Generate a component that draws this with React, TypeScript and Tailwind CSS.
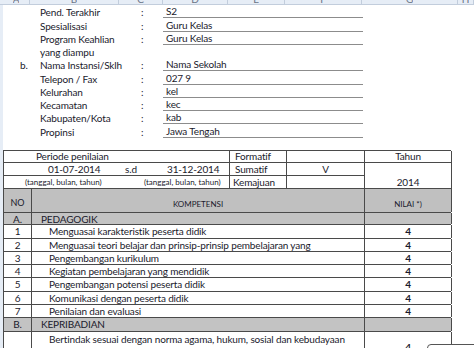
import React from 'react'

const headCols = [
  { w: 'w-[27px]', l: 'A' },
  { w: 'w-[89px]', l: 'B' },
  { w: 'w-[44px]', l: 'C' },
  { w: 'w-[65px]', l: 'D' },
  { w: 'w-[57px]', l: 'E' },
  { w: 'w-[77px]', l: 'F' },
  { w: 'w-[96px]', l: 'G' },
  { w: 'w-[16px]', l: 'H' },
]

const identitas = [
  { no: '', label: 'Pend. Terakhir', value: 'S2', line: true },
  { no: '', label: 'Spesialisasi', value: 'Guru Kelas', line: true },
  { no: '', label: 'Program Keahlian', value: 'Guru Kelas', line: true },
  { no: '', label: 'yang diampu', value: '', line: false, noColon: true },
  { no: 'b.', label: 'Nama Instansi/Sklh', value: 'Nama Sekolah', line: true },
  { no: '', label: 'Telepon / Fax', value: '027 9', line: true },
  { no: '', label: 'Kelurahan', value: 'kel', line: true },
  { no: '', label: 'Kecamatan', value: 'kec', line: true },
  { no: '', label: 'Kabupaten/Kota', value: 'kab', line: true },
  { no: '', label: 'Propinsi', value: 'Jawa Tengah', line: true },
]

const kompetensi = [
  { no: 'A.', text: 'PEDAGOGIK', nilai: '', section: true, h: 'h-[12px]' },
  { no: '1', text: 'Menguasai karakteristik peserta didik', nilai: '4', h: 'h-[14px]' },
  { no: '2', text: 'Menguasai teori belajar dan prinsip-prinsip pembelajaran yang', nilai: '4', h: 'h-[13px]' },
  { no: '3', text: 'Pengembangan kurikulum', nilai: '4', h: 'h-[13px]' },
  { no: '4', text: 'Kegiatan pembelajaran yang mendidik', nilai: '4', h: 'h-[13px]' },
  { no: '5', text: 'Pengembangan potensi peserta didik', nilai: '4', h: 'h-[14px]' },
  { no: '6', text: 'Komunikasi dengan peserta didik', nilai: '4', h: 'h-[13px]' },
  { no: '7', text: 'Penilaian dan evaluasi', nilai: '4', h: 'h-[13px]' },
  { no: 'B.', text: 'KEPRIBADIAN', nilai: '', section: true, h: 'h-[14px]' },
]

export default function App() {
  return (
    <div className="relative w-[474px] h-[348px] overflow-hidden bg-white text-[#1a1a2c] font-['Lato','Liberation_Sans',sans-serif] text-[10px] tracking-[-0.15px]">
      {/* column letters, scrolled almost out of view */}
      <div className="flex h-[5px] overflow-hidden bg-[#e6edf6] border-b border-[#c2cddc]">
        <div className="w-[3px]" />
        {headCols.map((c) => (
          <div key={c.l} className={`${c.w} shrink-0 h-[4px] overflow-hidden flex justify-center border-r border-[#c2cddc] text-[#6a7486]`}>
            <span className="block h-[4px] overflow-hidden">
              <span className="block leading-[10px] -mt-[6px]">{c.l}</span>
            </span>
          </div>
        ))}
      </div>

      <div className="flex">
        <div className="w-[3px] shrink-0 bg-[#e6edf6] self-stretch" />

        <div className="flex-1">
          {/* identitas */}
          <div>
            {identitas.map((r, i) => (
              <div key={i} className="flex h-[13.25px] items-end leading-[12px]">
                <div className="w-[27px] shrink-0 pl-[17px]">{r.no}</div>
                <div className="w-[89px] shrink-0 pl-[10px] whitespace-nowrap">{r.label}</div>
                <div className="w-[44px] shrink-0 pl-[22px]">{r.noColon ? '' : ':'}</div>
                <div className={`w-[200px] shrink-0 pl-[3px] h-full flex items-end ${r.line ? 'border-b border-[#8c8c8c]' : ''}`}>
                  {r.value}
                </div>
              </div>
            ))}
          </div>

          {/* periode penilaian */}
          <div className="mt-[12px] flex w-[448px] border-t border-l border-[#4a4a4a]">
            <div className="w-[360px] shrink-0">
              <div className="flex h-[12px] border-b border-[#4a4a4a] leading-[11px]">
                <div className="w-[225px] shrink-0 pl-[32px]">Periode penilaian</div>
                <div className="w-[57px] shrink-0 border-l border-[#4a4a4a] pl-[5px]">Formatif</div>
                <div className="w-[78px] shrink-0 border-l border-[#4a4a4a]" />
              </div>
              <div className="flex h-[13px] border-b border-[#4a4a4a] leading-[12px]">
                <div className="w-[225px] shrink-0 flex">
                  <span className="w-[121px] pl-[44px]">01-07-2014</span>
                  <span className="w-[42px]">s.d</span>
                  <span>31-12-2014</span>
                </div>
                <div className="w-[57px] shrink-0 border-l border-[#4a4a4a] pl-[5px]">Sumatif</div>
                <div className="w-[78px] shrink-0 border-l border-[#4a4a4a] text-center">V</div>
              </div>
              <div className="flex h-[13px] border-b border-[#4a4a4a] leading-[12px]">
                <div className="w-[225px] shrink-0 flex text-[8px] tracking-normal whitespace-nowrap">
                  <span className="w-[140px] pl-[21px]">(tanggal, bulan, tahun)</span>
                  <span>(tanggal, bulan, tahun)</span>
                </div>
                <div className="w-[57px] shrink-0 border-l border-[#4a4a4a] pl-[3px]">Kemajuan</div>
                <div className="w-[78px] shrink-0 border-l border-[#4a4a4a]" />
              </div>
            </div>
            <div className="w-[88px] shrink-0 border-l border-r border-b border-[#4a4a4a] flex flex-col">
              <div className="h-[12px] border-b border-[#4a4a4a] text-center leading-[11px]">Tahun</div>
              <div className="flex-1 flex items-end justify-center leading-[12px]">2014</div>
            </div>
          </div>

          {/* kompetensi */}
          <div className="w-[448px] border-l border-[#4a4a4a]">
            <div className="flex h-[24px] bg-[#c0c0c0] border-b border-[#4a4a4a] items-stretch tracking-normal">
              <div className="w-[27px] shrink-0 flex items-end justify-center pb-[2px] text-[9px]">NO</div>
              <div className="w-[333px] shrink-0 border-l border-[#4a4a4a] flex items-end justify-center pb-[2px] text-[8px]">KOMPETENSI</div>
              <div className="w-[88px] shrink-0 border-l border-r border-[#4a4a4a] flex items-end justify-center pb-[2px] text-[8px]">NILAI *)</div>
            </div>
            {kompetensi.map((k, i) => (
              <div key={i} className={`flex ${k.h} border-b border-[#4a4a4a] leading-[12px] ${k.section ? 'bg-[#c3c3c3]' : ''}`}>
                <div className="w-[27px] shrink-0 text-center">{k.no}</div>
                <div className={`w-[333px] shrink-0 border-l border-[#4a4a4a] whitespace-nowrap ${k.section ? 'pl-[9px]' : 'pl-[17px]'}`}>{k.text}</div>
                <div className="w-[88px] shrink-0 border-l border-r border-[#4a4a4a] text-center font-bold">{k.nilai}</div>
              </div>
            ))}
            <div className="flex h-[30px]">
              <div className="w-[27px] shrink-0" />
              <div className="w-[333px] shrink-0 border-l border-[#4a4a4a] pl-[17px] pt-[1px] leading-[12px] whitespace-nowrap">
                Bertindak sesuai dengan norma agama, hukum, sosial dan kebudayaan
              </div>
              <div className="w-[88px] shrink-0 border-l border-r border-[#4a4a4a] text-center font-bold pt-[9px] leading-[12px]">4</div>
            </div>
          </div>
        </div>
      </div>

      {/* comment callout */}
      <div className="absolute left-[427px] top-[344px] w-[60px] h-[20px] rounded-tl-[4px] border border-[#555] bg-white" />
    </div>
  )
}
